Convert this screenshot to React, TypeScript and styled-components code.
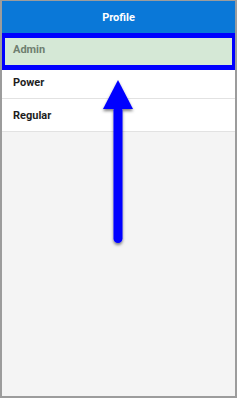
import React from 'react';
import styled, { createGlobalStyle } from 'styled-components';

const GlobalStyle = createGlobalStyle`
  html, body {
    margin: 0;
    padding: 0;
    background: #ffffff;
  }
  body {
    font-family: Roboto, "Liberation Sans", Arial, sans-serif;
  }
`;

const profiles = [
  { name: 'Admin', selected: true },
  { name: 'Power', selected: false },
  { name: 'Regular', selected: false },
];

const App = () => {
  return (
    <>
      <GlobalStyle />
      <Frame>
        <Header>Profile</Header>
        <List>
          {profiles.map((p) => (
            <Row key={p.name} selected={p.selected}>
              {p.name}
            </Row>
          ))}
        </List>
        <Highlight />
        <Arrow width="40" height="175" viewBox="0 0 40 175">
          <defs>
            <filter id="shadow" x="-50%" y="-10%" width="200%" height="130%">
              <feDropShadow dx="0" dy="2" stdDeviation="1.6" floodColor="#000" floodOpacity="0.5" />
            </filter>
          </defs>
          <g filter="url(#shadow)">
            <polygon points="20,4 35,33 5,33" fill="#0000ff" />
            <rect x="15.5" y="30" width="9" height="137" rx="4.5" fill="#0000ff" />
          </g>
        </Arrow>
      </Frame>
    </>
  );
};

export default App;

const Frame = styled.div`
  position: relative;
  box-sizing: border-box;
  width: 237px;
  height: 398px;
  background: #f4f4f4;
  border: 2px solid #9c9c9c;
  border-top-width: 1px;
  display: flex;
  flex-direction: column;
  overflow: hidden;
`;

const Header = styled.div`
  height: 32px;
  background: #0a78d8;
  color: #ffffff;
  font-size: 11px;
  font-weight: 700;
  display: flex;
  align-items: center;
  justify-content: center;
  flex-shrink: 0;
`;

const List = styled.div`
  display: flex;
  flex-direction: column;
  background: #ffffff;
`;

const Row = styled.div<{ selected?: boolean }>`
  height: 33px;
  box-sizing: border-box;
  padding-left: 11px;
  display: flex;
  align-items: center;
  font-size: 11px;
  font-weight: 700;
  color: ${(p) => (p.selected ? '#6f7f70' : '#1e1e1e')};
  background: ${(p) => (p.selected ? '#d5e8d6' : '#ffffff')};
  border-bottom: 1px solid #e2e2e2;
`;

const Highlight = styled.div`
  position: absolute;
  left: -2px;
  top: 32px;
  width: 237px;
  height: 37px;
  box-sizing: border-box;
  border: 5px solid #0000ff;
`;

const Arrow = styled.svg`
  position: absolute;
  left: 96px;
  top: 75px;
  overflow: visible;
`;
